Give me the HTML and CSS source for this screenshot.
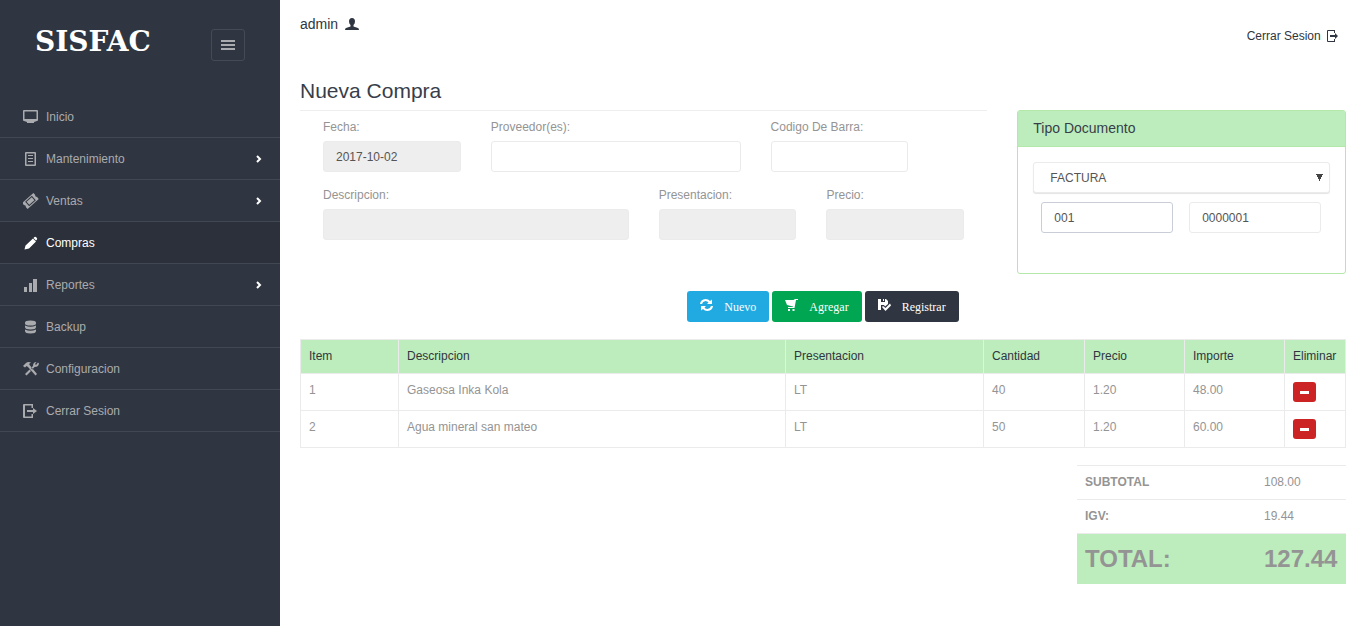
FILE: index.html
```html
<!DOCTYPE html>
<html lang="es">
<head>
    <meta charset="UTF-8">
    <meta name="viewport" content="width=device-width, initial-scale=1.0">
    <title>SISFAC - Nueva Compra</title>
    <link rel="stylesheet" href="styles.css">
</head>
<body>
    <div class="page-container">
        <aside class="sidebar">
            <div class="sidebar-header">
                <a href="#" class="logo">SISFAC</a>
                <button type="button" class="menu-toggle" aria-label="Menu">
                    <svg width="14" height="10" viewBox="0 0 14 10"><path d="M0 0h14v2H0zM0 4h14v2H0zM0 8h14v2H0z"/></svg>
                </button>
            </div>

            <nav class="main-menu">
                <a href="#">
                    <svg class="icon" viewBox="0 0 16 16"><path fill-rule="evenodd" d="M1 1h13q1 0 1 1v9q0 1-1 1l-3 1v1H4v-1l-3-1q-1 0-1-1V2q0-1 1-1zm.500 1.500V10h12V2.500z"/></svg>
                    <span>Inicio</span>
                </a>
                <a href="#">
                    <svg class="icon" viewBox="0 0 16 16"><path fill-rule="evenodd" d="M3 1h9q1 0 1 1v12q0 1-1 1H3q-1 0-1-1V2q0-1 1-1zm.500 1.500v11h8v-11zM5 4h5v1H5zm0 3h5v1H5zm0 3h5v1H5z"/></svg>
                    <span>Mantenimiento</span>
                    <svg class="arrow" viewBox="0 0 6 8"><path d="M1 1l3 3-3 3"/></svg>
                </a>
                <a href="#">
                    <svg class="icon" viewBox="0 0 16 16"><g transform="rotate(-42 7.500 8)"><path fill-rule="evenodd" d="M0 4h15v2.500q-1.500 1.500 0 3V12H0V9.500q1.500-1.500 0-3zm3 1v6h9V5z"/><path d="M4 6h7v4H4z"/></g></svg>
                    <span>Ventas</span>
                    <svg class="arrow" viewBox="0 0 6 8"><path d="M1 1l3 3-3 3"/></svg>
                </a>
                <a href="#" class="active">
                    <svg class="icon" viewBox="0 0 16 16"><path d="M1.500 14.500l1-4L10 3.500l3 3L6 13.500zM10.500 3l1-1q1-.5 2 .5t.5 2l-1 1z"/></svg>
                    <span>Compras</span>
                </a>
                <a href="#">
                    <svg class="icon" viewBox="0 0 16 16"><path d="M1 10h3v5H1zM6 6h3v9H6zM10 2h4v13h-4z"/></svg>
                    <span>Reportes</span>
                    <svg class="arrow" viewBox="0 0 6 8"><path d="M1 1l3 3-3 3"/></svg>
                </a>
                <a href="#">
                    <svg class="icon" viewBox="0 0 16 16"><path d="M2 3.500Q2 1.500 7.500 1.500T13 3.500v1Q13 6.500 7.500 6.500T2 4.500zM2 6.500q5.500 2.500 11 0v1.500q0 2.500-5.500 2.500T2 8zM2 10.500q5.500 2.500 11 0V12q0 2.500-5.500 2.500T2 12z"/></svg>
                    <span>Backup</span>
                </a>
                <a href="#">
                    <svg class="icon" viewBox="0 0 16 16"><path d="M0 5l3-3q2-1.500 5-.5L6 3l1 1.500L14 13l-1.500 1.500L5 6 3.500 5 2 6.500zM15 1.500L13 4l-1-1 1.500-2Q10 1 10 5l-2 2 1.300 1.500L11.500 6Q15.500 6 16 2.500zM6.500 8.500L2 13l1.500 1.500L8 10z"/></svg>
                    <span>Configuracion</span>
                </a>
                <a href="#">
                    <svg class="icon" viewBox="0 0 16 16"><path d="M1 1h9v4H8.500V2.500H2v11h6.500V11H10v4H1q-1 0-1-1V2q0-1 1-1zM4 7h6V5l4 3-4 3V9H4z"/></svg>
                    <span>Cerrar Sesion</span>
                </a>
            </nav>
        </aside>

        <main class="main-content">
            <header class="top-bar">
                <a href="#" class="user">admin
                    <svg width="14" height="13" viewBox="0 0 14 13"><path d="M7 0q3 0 3 3.500Q10 5.500 8.500 7v1.500L13 10q1 .5 1 2H0q0-1.500 1-2l4.500-1.500V7Q4 5.500 4 3.500 4 0 7 0z"/></svg>
                </a>
                <a href="#" class="logout">Cerrar Sesion
                    <svg width="11" height="12" viewBox="0 0 11 12"><path d="M1 0h7v3H7V1H1v10h6V9h1v3H1q-1 0-1-1V1q0-1 1-1zM3 5h5V3l3 3-3 3V7H3z"/></svg>
                </a>
            </header>

            <h2>Nueva Compra</h2>

            <form>
                <div class="row">
                    <div class="purchase">
                        <div class="field col-3">
                            <label for="fecha">Fecha:</label>
                            <input type="text" id="fecha" class="form-control" value="2017-10-02" readonly>
                        </div>
                        <div class="field col-5">
                            <label for="proveedor">Proveedor(es):</label>
                            <input type="text" id="proveedor" class="form-control">
                        </div>
                        <div class="field col-3">
                            <label for="codigo">Codigo De Barra:</label>
                            <input type="text" id="codigo" class="form-control">
                        </div>
                        <div class="field col-6">
                            <label for="descripcion">Descripcion:</label>
                            <input type="text" id="descripcion" class="form-control" readonly>
                        </div>
                        <div class="field col-3">
                            <label for="presentacion">Presentacion:</label>
                            <input type="text" id="presentacion" class="form-control" readonly>
                        </div>
                        <div class="field col-3">
                            <label for="precio">Precio:</label>
                            <input type="text" id="precio" class="form-control" readonly>
                        </div>
                    </div>

                    <section class="panel">
                        <h3>Tipo Documento</h3>
                        <div class="panel-body">
                            <select class="form-control" aria-label="Tipo Documento">
                                <option>FACTURA</option>
                                <option>BOLETA</option>
                            </select>
                            <div class="doc-number">
                                <input type="text" id="serie" class="form-control" value="001" aria-label="Serie" autofocus>
                                <input type="text" class="form-control" value="0000001" aria-label="Numero">
                            </div>
                        </div>
                    </section>
                </div>

                <div class="buttons">
                    <button type="button" class="btn btn-info">
                        <svg width="13" height="12" viewBox="0 0 13 12"><path d="M0 5q.5-4.500 5.500-5 3 0 4.500 2L12 .5V5H7l1.500-1.500Q7.500 2 5.500 2 2.500 2.500 2 5zM13 7q-.5 4.500-5.500 5-3 0-4.500-2L1 11.500V7h5L4.500 8.500q1 1.500 3 1.500Q10.500 9.500 11 7z"/></svg>
                        <span>Nuevo</span>
                    </button>
                    <button type="button" class="btn btn-success">
                        <svg width="13" height="12" viewBox="0 0 13 12"><path d="M0 1h8.500L10 0h3v1h-2L9.500 9H3V8h5V7.500L2 6zM3 10h2v2H3zM7.500 10h2v2h-2z"/></svg>
                        <span>Agregar</span>
                    </button>
                    <button type="button" class="btn btn-primary">
                        <svg width="13" height="12" viewBox="0 0 13 12"><path fill-rule="evenodd" d="M0 0h8l2 2v3L7 7.500 6 6H3v5H0zm3 0v3h4V0H6v2H5V0z"/><path d="M4 8l1-1 2.500 2L12 4.500l1 2L7.500 12z"/></svg>
                        <span>Registrar</span>
                    </button>
                </div>
            </form>

            <table class="items">
                <colgroup>
                    <col class="w-item">
                    <col>
                    <col class="w-pres">
                    <col class="w-cant">
                    <col class="w-num">
                    <col class="w-num">
                    <col class="w-del">
                </colgroup>
                <thead>
                    <tr>
                        <th>Item</th>
                        <th>Descripcion</th>
                        <th>Presentacion</th>
                        <th>Cantidad</th>
                        <th>Precio</th>
                        <th>Importe</th>
                        <th>Eliminar</th>
                    </tr>
                </thead>
                <tbody>
                    <tr>
                        <td>1</td>
                        <td>Gaseosa Inka Kola</td>
                        <td>LT</td>
                        <td>40</td>
                        <td>1.20</td>
                        <td>48.00</td>
                        <td><button type="button" class="btn-delete" aria-label="Eliminar"><svg width="9" height="3" viewBox="0 0 9 3"><path d="M0 0h9v3H0z"/></svg></button></td>
                    </tr>
                    <tr>
                        <td>2</td>
                        <td>Agua mineral san mateo</td>
                        <td>LT</td>
                        <td>50</td>
                        <td>1.20</td>
                        <td>60.00</td>
                        <td><button type="button" class="btn-delete" aria-label="Eliminar"><svg width="9" height="3" viewBox="0 0 9 3"><path d="M0 0h9v3H0z"/></svg></button></td>
                    </tr>
                </tbody>
            </table>

            <table class="totals">
                <tr>
                    <th>SUBTOTAL</th>
                    <td>108.00</td>
                </tr>
                <tr>
                    <th>IGV:</th>
                    <td>19.44</td>
                </tr>
                <tr class="total">
                    <th>TOTAL:</th>
                    <td>127.44</td>
                </tr>
            </table>
        </main>
    </div>

    <script>
        // Cursor al final de la serie
        const serie = document.getElementById('serie');
        serie.focus();
        serie.setSelectionRange(serie.value.length, serie.value.length);
    </script>
</body>
</html>
```

FILE: styles.css
```css
* {
    box-sizing: border-box;
}

body {
    margin: 0;
    font-family: "Liberation Sans", Arial, sans-serif;
    font-size: 12px;
    line-height: 17px;
    color: #949494;
    background-color: #fff;
}

a {
    color: #303641;
    text-decoration: none;
}

svg {
    fill: currentColor;
}

.page-container {
    display: flex;
    min-height: 100vh;
}

/* menu lateral */
.sidebar {
    flex: 0 0 280px;
    background-color: #303641;
}

.sidebar-header {
    display: flex;
    justify-content: space-between;
    align-items: flex-start;
    height: 96px;
    padding: 29px 35px 0;
}

.logo {
    font-family: "DejaVu Serif", serif;
    font-size: 28px;
    font-weight: bold;
    line-height: 26px;
    color: #fff;
}

.menu-toggle {
    display: flex;
    align-items: center;
    justify-content: center;
    width: 34px;
    height: 32px;
    padding: 0;
    color: #aaabae;
    background: none;
    border: 1px solid #454a54;
    border-radius: 3px;
    cursor: pointer;
}

.main-menu a {
    display: flex;
    align-items: center;
    height: 42px;
    padding: 2px 18px 0 23px;
    color: #aaabae;
    border-bottom: 1px solid #424853;
}

.main-menu a:hover,
.main-menu a.active {
    color: #fff;
    background-color: #2b303a;
}

.main-menu .icon {
    width: 16px;
    height: 16px;
    margin-right: 7px;
    margin-bottom: 1px;
}

.main-menu .arrow {
    width: 6px;
    height: 8px;
    margin-bottom: 2px;
    margin-left: auto;
    fill: none;
    stroke: #fff;
    stroke-width: 2;
}

/* contenido */
.main-content {
    flex: 1;
    min-width: 0;
    padding: 14px 20px 20px;
}

.top-bar {
    display: flex;
    justify-content: space-between;
    height: 31px;
    margin-bottom: 34px;
    padding-right: 8px;
}

.top-bar svg {
    margin-left: 3px;
    vertical-align: -2px;
}

.user {
    font-size: 14px;
    line-height: 20px;
}

.logout {
    align-self: flex-end;
}

h2 {
    margin: 0 0 8px;
    font-size: 21px;
    font-weight: normal;
    line-height: 23px;
    color: #373e4a;
}

.row {
    display: grid;
    grid-template-columns: repeat(12, 1fr);
    column-gap: 30px;
}

.purchase {
    grid-column: span 8;
    display: grid;
    grid-template-columns: repeat(12, 1fr);
    gap: 15px 30px;
    align-content: start;
    padding: 8px 23px 0;
    border-top: 1px solid #eee;
}

.col-3 {
    grid-column: span 3;
}

.col-5 {
    grid-column: span 5;
}

.col-6 {
    grid-column: span 6;
}

.field label {
    display: block;
    margin-bottom: 5px;
}

.form-control {
    display: block;
    width: 100%;
    height: 31px;
    padding: 6px 12px;
    font-family: inherit;
    font-size: 12px;
    line-height: 17px;
    color: #555;
    background-color: #fff;
    border: 1px solid #ebebeb;
    border-radius: 3px;
}

.form-control[readonly] {
    background-color: #eee;
}

.form-control:focus {
    border-color: #c8cdd7;
    outline: none;
}

select.form-control {
    padding: 1px 16px 0;
    appearance: none;
    background-image: conic-gradient(from -27deg at 50% 100%, #444 54deg, transparent 0);
    background-repeat: no-repeat;
    background-position: right 6px top 11px;
    background-size: 7px 7px;
    box-shadow: 0 1px 1px #e4e4e4;
}

/* tipo de documento */
.panel {
    grid-column: span 4;
    border: 1px solid #b4e8a8;
    border-radius: 3px;
}

.panel h3 {
    margin: 0;
    padding: 8px 15px 9px;
    font-size: 14px;
    font-weight: normal;
    line-height: 18px;
    color: #373e4a;
    background-color: #bdedbc;
    border-bottom: 1px solid #b4e8a8;
}

.panel-body {
    padding: 15px 15px 40px;
}

.doc-number {
    display: grid;
    grid-template-columns: 1fr 1fr;
    gap: 16px;
    padding: 9px 9px 0 8px;
}

.buttons {
    display: flex;
    justify-content: center;
    gap: 3px;
    margin: 17px 0;
}

.btn {
    display: flex;
    align-items: center;
    gap: 11px;
    height: 31px;
    padding: 1px 13px 0;
    font-family: "Liberation Serif", "Times New Roman", serif;
    font-size: 12px;
    color: #fff;
    border: none;
    border-radius: 3px;
    cursor: pointer;
}

.btn svg {
    margin-bottom: 4px;
}

.btn-info {
    background-color: #21a9e1;
}

.btn-success {
    background-color: #00a651;
}

.btn-primary {
    background-color: #303641;
}

/* tablas */
table {
    border-collapse: collapse;
    table-layout: fixed;
}

th,
td {
    padding: 8px;
    text-align: left;
    vertical-align: top;
}

.items {
    width: 100%;
}

.items th,
.items td {
    border: 1px solid #ebebeb;
}

.items th {
    font-weight: normal;
    color: #303641;
    background-color: #bdedbc;
}

.w-item {
    width: 98px;
}

.w-pres {
    width: 198px;
}

.w-cant {
    width: 101px;
}

.w-num {
    width: 100px;
}

.w-del {
    width: 61px;
}

.btn-delete {
    display: flex;
    align-items: center;
    justify-content: center;
    width: 23px;
    height: 20px;
    padding: 0;
    color: #fff;
    background-color: #cc2424;
    border: none;
    border-radius: 3px;
    cursor: pointer;
}

.totals {
    width: 269px;
    margin: 17px 0 0 auto;
}

.totals th,
.totals td {
    border-top: 1px solid #ebebeb;
}

.totals th {
    width: 179px;
}

.totals .total th,
.totals .total td {
    font-size: 24px;
    font-weight: bold;
    line-height: 34px;
    background-color: #bdedbc;
}
```
